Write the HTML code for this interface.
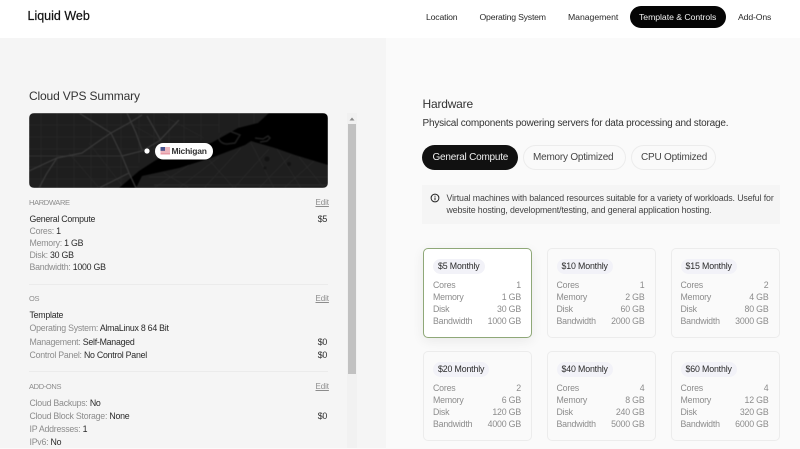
<!DOCTYPE html>
<html><head><meta charset="utf-8">
<style>
*{box-sizing:border-box;margin:0;padding:0}
html,body{width:800px;height:448px;overflow:hidden;background:#fafafa;font-family:"Liberation Sans",sans-serif}
.t{position:absolute;white-space:nowrap;line-height:14px;height:14px;font-size:8.8px;letter-spacing:-.25px;color:#2a2a2a}
.g{color:#8c8c8c}
.r{text-align:right}
.h{color:#8c8c8c;font-size:7.5px;letter-spacing:-.35px}
.e{color:#8c8c8c;font-size:8px;letter-spacing:-.1px;text-decoration:underline}
.n{font-size:8.7px;letter-spacing:-.15px}
.tab{font-size:10px;letter-spacing:-.22px;color:#444}
.inf{font-size:8.8px;letter-spacing:-.12px;color:#444}
.b{position:absolute;display:block}
.card{position:absolute;width:109px;height:90px;border:1px solid #ececec;border-radius:5px}
.card .pill{position:absolute;left:9px;top:10px;height:15px;border-radius:8px;background:#f2f2f8;font-size:8.8px;letter-spacing:-.15px;line-height:15px;color:#2a2a2a;padding:0 5px;white-space:nowrap}
.card .l,.card .v{position:absolute;color:#8c8c8c;font-size:8.8px;letter-spacing:-.2px;line-height:12px;white-space:nowrap}
.card .l{left:9px}
.card .v{right:10px}
</style></head><body>
<div class="b" style="left:0;top:0;width:800px;height:38px;background:#fff"></div>
<div class="b" style="left:0;top:38px;width:386px;height:410px;background:#f5f5f5"></div>

<div class="t" style="left:27.5px;top:9px;font-size:12.5px;letter-spacing:0;line-height:15px;height:15px;color:#111;-webkit-text-stroke:.2px #111">Liquid Web</div>
<div class="t n" style="left:426px;top:10px;letter-spacing:-.18px">Location</div>
<div class="t n" style="left:479.5px;top:10px;letter-spacing:-.2px">Operating System</div>
<div class="t n" style="left:568px;top:10px;letter-spacing:-.05px">Management</div>
<div class="b" style="left:630px;top:6px;width:95.5px;height:22px;border-radius:11px;background:#050505"></div>
<div class="t n" style="left:639px;top:10px;letter-spacing:-.05px;color:#f2f2f2">Template &amp; Controls</div>
<div class="t n" style="left:738px;top:10px;letter-spacing:-.15px">Add-Ons</div>

<div class="t" style="left:29px;top:88px;font-size:12px;letter-spacing:-.15px;line-height:16px;height:16px;color:#333">Cloud VPS Summary</div>

<svg class="b" style="left:29px;top:113px" width="299" height="75" viewBox="0 0 299 75">
<defs><clipPath id="c"><rect width="299" height="75" rx="5"/></clipPath></defs>
<g clip-path="url(#c)">
<g style="filter:blur(.4px)">
<rect width="299" height="75" fill="#1e1e1e"/>
<g stroke="#282828" stroke-width="0.7" fill="none">
<path d="M0 12H190M0 24H170M0 36H150M0 54H110M0 66H95M12 0V75M28 0V75M45 0V75M62 0V75M78 0V75M92 0V75M110 0V50M125 0V45M140 0V40M155 0V34M172 0V28M190 0V20M210 0V14M225 0V10"/>
<path d="M60 30L95 75M40 40L70 75M100 10L150 38M135 3L175 25"/>
</g>
<path d="M0 43H93" stroke="#303030" stroke-width="1" fill="none"/>
<path d="M240 0L229 10 209 15 182 30 150 38 127 47 110 58 90 75H299V0Z" fill="#000"/>
<path d="M107 75L113 63 150 55 182 45 216 32 222 28 246 35 266 42 299 52V75Z" fill="#1e1e1e"/>
<g stroke="#2a2a2a" stroke-width="0.7" fill="none">
<path d="M125 75L160 52M150 75L190 44M175 75L212 35M205 75L240 36M230 75L262 42M255 75L285 48M120 64H299M135 60L160 75M180 47L205 75M222 30L245 75M248 36L272 75M270 44L295 75"/>
</g>
<path d="M125 72H299" stroke="#303030" stroke-width=".8"/>
<circle cx="238" cy="46" r="2.500" fill="#131313"/><circle cx="260" cy="51" r="2" fill="#131313"/><circle cx="236" cy="55" r="1.500" fill="#151515"/>
<g stroke="#202020" stroke-width="1.500" fill="none">
<path d="M190 24c3-5 9-7 13-5l8 3-5 8-8 1c-4 0-9-3-8-7z"/>
<path d="M226 25l8 1 5-3 2 2-3 3-7 1"/>
</g>
<g stroke="#393939" stroke-width="1.200" fill="none">
<path d="M0 58L28 45 53 40 70 28 82 20 100 10 113 2"/>
<path d="M50 0L82 20 93 43 100 60 107 75"/>
<path d="M98 0L107 20 113 37"/>
<path d="M118 3L132 28"/>
<path d="M93 43L113 38 130 28 150 7"/>
<path d="M28 45L18 60 10 75"/>
<path d="M100 60L70 75"/>
</g>
</g>
<circle cx="118" cy="38" r="2.600" fill="#fff"/>
<rect x="126" y="30" width="58" height="16.500" rx="8.200" fill="#fff"/>
<rect x="131.500" y="34" width="9.500" height="7.500" fill="#e89aa6"/>
<path d="M131.500 35h9.500M131.500 37h9.500M131.500 39h9.500" stroke="#f4e4e6" stroke-width=".7"/>
<rect x="131.500" y="34" width="4.500" height="3.800" fill="#4a5590"/>
</g>
</svg>
<div class="t" style="left:171.500px;top:144px;font-size:8.500px;letter-spacing:-.2px;font-weight:bold;color:#333">Michigan</div>

<div class="t h" style="left:29px;top:196px">HARDWARE</div>
<div class="t e" style="left:315.500px;top:196px">Edit</div>
<div class="t" style="left:29.500px;top:212px">General Compute</div>
<div class="t r" style="right:473px;top:212px">$5</div>
<div class="t" style="left:29.500px;top:224px"><span class="g">Cores:</span> 1</div>
<div class="t" style="left:29.500px;top:236px"><span class="g">Memory:</span> 1 GB</div>
<div class="t" style="left:29.500px;top:248px"><span class="g">Disk:</span> 30 GB</div>
<div class="t" style="left:29.500px;top:260px"><span class="g">Bandwidth:</span> 1000 GB</div>
<div class="b" style="left:29px;top:284px;width:299px;height:1px;background:#ebebeb"></div>

<div class="t h" style="left:29px;top:292px">OS</div>
<div class="t e" style="left:315.500px;top:292px">Edit</div>
<div class="t" style="left:29.500px;top:308px">Template</div>
<div class="t" style="left:29.500px;top:321px"><span class="g">Operating System:</span> AlmaLinux 8 64 Bit</div>
<div class="t" style="left:29.500px;top:335px"><span class="g">Management:</span> Self-Managed</div>
<div class="t r" style="right:473px;top:335px">$0</div>
<div class="t" style="left:29.500px;top:348px"><span class="g">Control Panel:</span> No Control Panel</div>
<div class="t r" style="right:473px;top:348px">$0</div>
<div class="b" style="left:29px;top:371px;width:299px;height:1px;background:#ebebeb"></div>

<div class="t h" style="left:29px;top:380px">ADD-ONS</div>
<div class="t e" style="left:315.500px;top:380px">Edit</div>
<div class="t" style="left:29.500px;top:396px"><span class="g">Cloud Backups:</span> No</div>
<div class="t" style="left:29.500px;top:409px"><span class="g">Cloud Block Storage:</span> None</div>
<div class="t r" style="right:473px;top:409px">$0</div>
<div class="t" style="left:29.500px;top:422px"><span class="g">IP Addresses:</span> 1</div>
<div class="t" style="left:29.500px;top:435px"><span class="g">IPv6:</span> No</div>

<div class="b" style="left:347px;top:113px;width:10px;height:335px;background:#f1f1f1"></div>
<div class="b" style="left:348px;top:124px;width:8px;height:250px;background:#c1c1c1"></div>
<svg class="b" style="left:348px;top:116px" width="8" height="6"><path d="M4 1.500L6.500 4.500H1.500Z" fill="#8a8a8a"/></svg>

<div class="t" style="left:422.500px;top:96px;font-size:12px;letter-spacing:-.2px;line-height:16px;height:16px;color:#333">Hardware</div>
<div class="t" style="left:422.500px;top:117px;font-size:10px;letter-spacing:-.2px;color:#333">Physical components powering servers for data processing and storage.</div>

<div class="b" style="left:422px;top:145px;width:96px;height:25px;border-radius:13px;background:#111"></div>
<div class="t tab" style="left:432.500px;top:151px;color:#f0f0f0">General Compute</div>
<div class="b" style="left:523px;top:145px;width:103px;height:25px;border-radius:13px;border:1px solid #ececec"></div>
<div class="t tab" style="left:533px;top:151px">Memory Optimized</div>
<div class="b" style="left:631px;top:145px;width:85px;height:25px;border-radius:13px;border:1px solid #ececec"></div>
<div class="t tab" style="left:641px;top:151px">CPU Optimized</div>

<div class="b" style="left:422px;top:185px;width:358px;height:39px;background:#f5f5f5"></div>
<svg class="b" style="left:430px;top:193px" width="10" height="10" viewBox="0 0 10 10"><circle cx="5" cy="5" r="3.900" fill="none" stroke="#222" stroke-width="1"/><path d="M5 4.500V7.300M5 2.700V3.700" stroke="#222" stroke-width="1"/></svg>
<div class="t inf" style="left:446.500px;top:191px">Virtual machines with balanced resources suitable for a variety of workloads. Useful for</div>
<div class="t inf" style="left:446.500px;top:203px">website hosting, development/testing, and general application hosting.</div>

<div class="card" style="left:423px;top:247.500px;background:#fff;border-color:#8fa878;box-shadow:0 3px 12px rgba(0,0,0,.07)">
<div class="pill">$5 Monthly</div>
<div class="l" style="top:30px">Cores</div><div class="v" style="top:30px">1</div>
<div class="l" style="top:42px">Memory</div><div class="v" style="top:42px">1 GB</div>
<div class="l" style="top:54px">Disk</div><div class="v" style="top:54px">30 GB</div>
<div class="l" style="top:66px">Bandwidth</div><div class="v" style="top:66px">1000 GB</div>
</div>
<div class="card" style="left:546.500px;top:247.500px">
<div class="pill">$10 Monthly</div>
<div class="l" style="top:30px">Cores</div><div class="v" style="top:30px">1</div>
<div class="l" style="top:42px">Memory</div><div class="v" style="top:42px">2 GB</div>
<div class="l" style="top:54px">Disk</div><div class="v" style="top:54px">60 GB</div>
<div class="l" style="top:66px">Bandwidth</div><div class="v" style="top:66px">2000 GB</div>
</div>
<div class="card" style="left:670.500px;top:247.500px">
<div class="pill">$15 Monthly</div>
<div class="l" style="top:30px">Cores</div><div class="v" style="top:30px">2</div>
<div class="l" style="top:42px">Memory</div><div class="v" style="top:42px">4 GB</div>
<div class="l" style="top:54px">Disk</div><div class="v" style="top:54px">80 GB</div>
<div class="l" style="top:66px">Bandwidth</div><div class="v" style="top:66px">3000 GB</div>
</div>
<div class="card" style="left:423px;top:351px">
<div class="pill">$20 Monthly</div>
<div class="l" style="top:30px">Cores</div><div class="v" style="top:30px">2</div>
<div class="l" style="top:42px">Memory</div><div class="v" style="top:42px">6 GB</div>
<div class="l" style="top:54px">Disk</div><div class="v" style="top:54px">120 GB</div>
<div class="l" style="top:66px">Bandwidth</div><div class="v" style="top:66px">4000 GB</div>
</div>
<div class="card" style="left:546.500px;top:351px">
<div class="pill">$40 Monthly</div>
<div class="l" style="top:30px">Cores</div><div class="v" style="top:30px">4</div>
<div class="l" style="top:42px">Memory</div><div class="v" style="top:42px">8 GB</div>
<div class="l" style="top:54px">Disk</div><div class="v" style="top:54px">240 GB</div>
<div class="l" style="top:66px">Bandwidth</div><div class="v" style="top:66px">5000 GB</div>
</div>
<div class="card" style="left:670.500px;top:351px">
<div class="pill">$60 Monthly</div>
<div class="l" style="top:30px">Cores</div><div class="v" style="top:30px">4</div>
<div class="l" style="top:42px">Memory</div><div class="v" style="top:42px">12 GB</div>
<div class="l" style="top:54px">Disk</div><div class="v" style="top:54px">320 GB</div>
<div class="l" style="top:66px">Bandwidth</div><div class="v" style="top:66px">6000 GB</div>
</div>
</body></html>
